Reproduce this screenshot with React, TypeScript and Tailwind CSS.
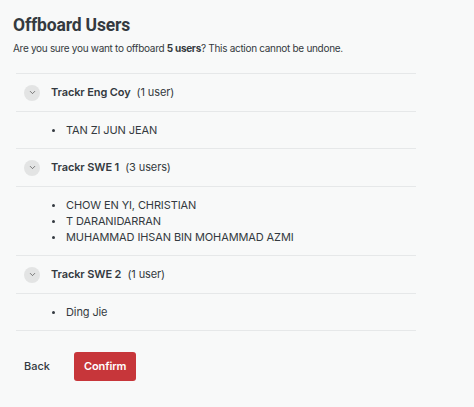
import { ChevronDown } from "lucide-react";

const groups = [
  { name: "Trackr Eng Coy", count: "(1 user)", users: ["TAN ZI JUN JEAN"] },
  {
    name: "Trackr SWE 1",
    count: "(3 users)",
    users: ["CHOW EN YI, CHRISTIAN", "T DARANIDARRAN", "MUHAMMAD IHSAN BIN MOHAMMAD AZMI"],
  },
  { name: "Trackr SWE 2", count: "(1 user)", users: ["Ding Jie"] },
];

export default function App() {
  return (
    <div
      className="min-h-[407px] w-[474px] bg-[#f8f9f9] text-[#343a40]"
      style={{ fontFamily: "Inter, 'Noto Sans', sans-serif" }}
    >
      <div className="px-[13px] pt-[11px]">
        <h1
          className="text-[17.5px] font-bold leading-[28px] tracking-[-0.01em] text-[#343a40]"
          style={{ fontFamily: "Roboto, Inter, sans-serif" }}
        >
          Offboard Users
        </h1>
        <p className="mt-[2px] text-[10px] leading-[14px] tracking-[-0.03em] text-[#343a40]">
          Are you sure you want to offboard <span className="font-bold">5 users</span>? This action
          cannot be undone.
        </p>
      </div>

      <div className="mx-[16px] mt-[18px] w-[400px] border-t border-[#e6e8e9]">
        {groups.map((g) => (
          <div key={g.name}>
            <div className="flex h-[38px] items-center border-b border-[#e6e8e9] pl-[8px]">
              <span className="flex h-[16px] w-[16px] items-center justify-center rounded-full bg-[#e3e4e4]">
                <ChevronDown size={9} strokeWidth={2} className="text-[#555]" />
              </span>
              <span className="ml-[11px] text-[11px] font-semibold tracking-[-0.01em] text-[#343a40]">
                {g.name}
              </span>
              <span className="ml-[6px] text-[11px] tracking-[-0.01em] text-[#343a40]">{g.count}</span>
            </div>
            <ul className="border-b border-[#e6e8e9] py-[10px] pl-[36px]">
              {g.users.map((u) => (
                <li
                  key={u}
                  className="flex items-center text-[11px] leading-[16px] tracking-[-0.01em] text-[#343a40]"
                >
                  <span className="mr-[11px] h-[3px] w-[3px] rounded-full bg-[#343a40]" />
                  {u}
                </li>
              ))}
            </ul>
          </div>
        ))}
      </div>

      <div className="mt-[21px] flex items-center pl-[24px]">
        <button className="text-[11px] font-medium text-[#343a40]">Back</button>
        <button className="ml-[24px] h-[29px] rounded-[3px] bg-[#c7363a] px-[10px] text-[11px] font-semibold tracking-[-0.01em] text-white">
          Confirm
        </button>
      </div>
    </div>
  );
}
